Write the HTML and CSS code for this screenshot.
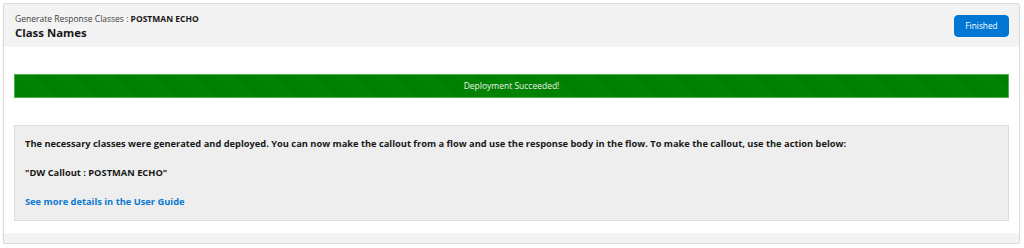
FILE: index.html
```html
<!DOCTYPE html>
<html>
<head>
<meta charset="utf-8">
<link rel="stylesheet" href="styles.css">
</head>
<body>
<div class="card">
  <div class="card-header">
    <div class="titles">
      <div class="subtitle">Generate Response Classes : <b>POSTMAN ECHO</b></div>
      <div class="title">Class Names</div>
    </div>
    <button class="btn">Finished</button>
  </div>
  <div class="card-body">
    <div class="progress">Deployment Succeeded!</div>
    <div class="info">
      <p>The necessary classes were generated and deployed. You can now make the callout from a flow and use the response body in the flow. To make the callout, use the action below:</p>
      <p>"DW Callout : POSTMAN ECHO"</p>
      <p><a class="link" href="#">See more details in the User Guide</a></p>
    </div>
  </div>
  <div class="card-footer"></div>
</div>
</body>
</html>
```
FILE: styles.css
```css
html, body {
  margin: 0;
  padding: 0;
  background: #ffffff;
}
body {
  padding: 3px 4px 0 3px;
  font-family: "Open Sans", "Liberation Sans", sans-serif;
  color: #181818;
}
.card {
  border: 1px solid #dddbda;
  border-radius: 2px;
  box-shadow: 0 2px 2px rgba(0,0,0,0.10);
  background: #fff;
}
.card-header {
  background: #f3f3f3;
  height: 43px;
  display: flex;
  align-items: center;
  justify-content: space-between;
  padding: 0 10px 0 11px;
}
.titles {
  padding-top: 2px;
}
.subtitle {
  font-size: 8.5px;
  line-height: 12px;
  color: #3e3e3c;
}
.subtitle b {
  font-weight: 700;
  color: #181818;
}
.title {
  font-size: 11.4px;
  line-height: 16px;
  font-weight: 700;
  color: #181818;
}
.btn {
  background: #0176d3;
  color: #fff;
  border: 1px solid #0176d3;
  border-radius: 4px;
  height: 22px;
  width: 55px;
  font-family: inherit;
  font-size: 8.3px;
  padding: 0;
}
.card-body {
  padding: 27px 10px 12px 10px;
}
.progress {
  height: 22px;
  border: 1px solid #4cae4c;
  background-color: #008000;
  background-image: linear-gradient(45deg, rgba(255,255,255,0.015) 25%, transparent 25%, transparent 50%, rgba(255,255,255,0.015) 50%, rgba(255,255,255,0.015) 75%, transparent 75%, transparent);
  background-size: 40px 40px;
  color: #e8f5e8;
  font-size: 8.5px;
  line-height: 22px;
  text-align: center;
}
.info {
  margin-top: 27px;
  background: #eeeeee;
  border: 1px solid #dddddd;
  padding: 10px 10px 4px 10px;
}
.info p {
  margin: 0;
  font-size: 9.3px;
  line-height: 29px;
  font-weight: 700;
  color: #181818;
}
.info p:first-child {
  line-height: 16px;
  padding-bottom: 6px;
}
.link {
  color: #0b79d0;
  text-decoration: none;
}
.card-footer {
  background: #f3f3f3;
  height: 10px;
}
```
